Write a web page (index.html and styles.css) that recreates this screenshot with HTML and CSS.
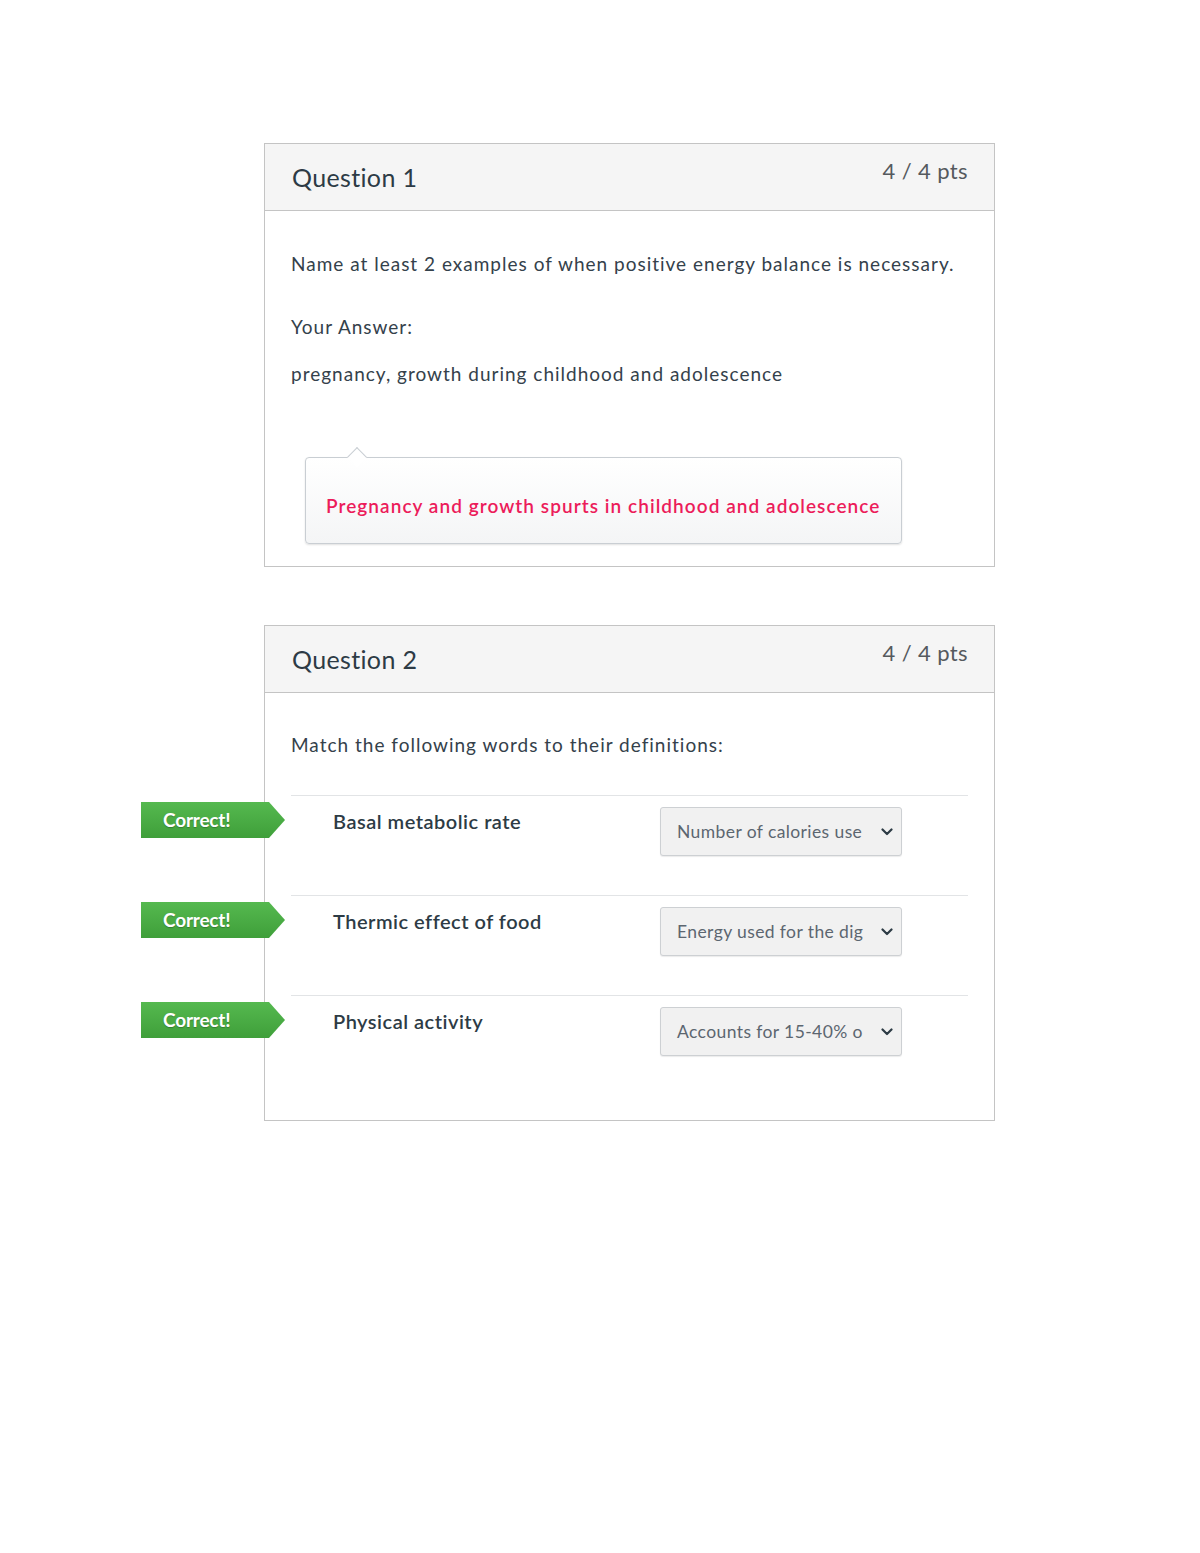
FILE: index.html
```html
<!DOCTYPE html>
<html>
<head>
<meta charset="utf-8">
<link rel="stylesheet" href="styles.css">
</head>
<body>
<main class="quiz">
  <section class="question q1">
    <header class="q-header">
      <h2 class="q-title">Question 1</h2>
      <span class="q-pts">4 / 4 pts</span>
    </header>
    <div class="q-body">
      <p class="q-text">Name at least 2 examples of when positive energy balance is necessary.</p>
      <p class="q-label">Your Answer:</p>
      <p class="q-answer">pregnancy, growth during childhood and adolescence</p>
      <div class="comment">
        <span class="comment-arrow"></span>
        <p class="comment-text">Pregnancy and growth spurts in childhood and adolescence</p>
      </div>
    </div>
  </section>

  <section class="question q2">
    <header class="q-header">
      <h2 class="q-title">Question 2</h2>
      <span class="q-pts">4 / 4 pts</span>
    </header>
    <div class="q-body">
      <p class="q-text">Match the following words to their definitions:</p>
      <div class="matches">
        <div class="match-row">
          <span class="badge">Correct!</span>
          <span class="match-term">Basal metabolic rate</span>
          <div class="select"><span class="select-text">Number of calories use</span><svg class="chev" viewBox="0 0 12 8" width="12" height="8"><path d="M1.5 1.5 L6 6 L10.5 1.5" fill="none" stroke="#2d3b45" stroke-width="2.2" stroke-linecap="round" stroke-linejoin="round"/></svg></div>
        </div>
        <div class="match-row">
          <span class="badge">Correct!</span>
          <span class="match-term">Thermic effect of food</span>
          <div class="select"><span class="select-text">Energy used for the dig</span><svg class="chev" viewBox="0 0 12 8" width="12" height="8"><path d="M1.5 1.5 L6 6 L10.5 1.5" fill="none" stroke="#2d3b45" stroke-width="2.2" stroke-linecap="round" stroke-linejoin="round"/></svg></div>
        </div>
        <div class="match-row">
          <span class="badge">Correct!</span>
          <span class="match-term">Physical activity</span>
          <div class="select"><span class="select-text">Accounts for 15-40% o</span><svg class="chev" viewBox="0 0 12 8" width="12" height="8"><path d="M1.5 1.5 L6 6 L10.5 1.5" fill="none" stroke="#2d3b45" stroke-width="2.2" stroke-linecap="round" stroke-linejoin="round"/></svg></div>
        </div>
      </div>
    </div>
  </section>
</main>
</body>
</html>
```
FILE: styles.css
```css
* { box-sizing: border-box; }
body {
  margin: 0;
  background: #fff;
  font-family: Lato, "Open Sans", sans-serif;
  color: #34414b;
}
.quiz {
  width: 731px;
  margin-left: 264px;
  padding-top: 143px;
  display: flex;
  flex-direction: column;
  gap: 58px;
}
.question {
  border: 1px solid #c4c4c4;
  position: relative;
}
.q-header {
  height: 67px;
  background: #f5f5f5;
  border-bottom: 1px solid #c4c4c4;
  display: flex;
  justify-content: space-between;
  padding: 0 26px 0 27px;
}
.q-title {
  margin: 0;
  font-size: 25px;
  font-weight: 400;
  letter-spacing: 0.35px;
  line-height: 28px;
  padding-top: 19px;
  color: #2d3b45;
}
.q-pts {
  font-size: 22px;
  letter-spacing: 0.4px;
  line-height: 26px;
  padding-top: 14px;
  color: #555a5e;
}
.q-body {
  padding: 0 26px;
}
.q-body p { margin: 0; }
.q-text, .q-label, .q-answer {
  font-size: 19px;
  letter-spacing: 1px;
  line-height: 28px;
}
.q1 .q-body { padding-top: 39px; padding-bottom: 22px; }
.q1 .q-label { margin-top: 35px; }
.q1 .q-answer { margin-top: 19px; }
.comment {
  position: relative;
  margin-top: 69px;
  margin-left: 14px;
  width: 597px;
  height: 87px;
  border: 1px solid #c9ced3;
  border-radius: 4px;
  background: linear-gradient(#fff, #f4f5f6);
  box-shadow: 0 1px 2px rgba(0,0,0,0.12);
  padding: 35px 0 0 20px;
}
.comment-arrow {
  position: absolute;
  top: -8px;
  left: 44px;
  width: 14px;
  height: 14px;
  background: #fff;
  border-left: 1px solid #c9ced3;
  border-top: 1px solid #c9ced3;
  transform: rotate(45deg);
}
.comment-text {
  font-size: 19px;
  letter-spacing: 1.05px;
  line-height: 26px;
  font-weight: 600;
  color: #ec1c5a;
}
.q2 .q-body { padding-top: 38px; padding-bottom: 65px; }
.matches { margin-top: 36px; }
.match-row {
  position: relative;
  height: 100px;
  border-top: 1px solid #e2e4e6;
  display: flex;
  align-items: flex-start;
  padding-top: 11px;
}
.match-row:nth-child(3) { height: 60px; }
.match-term {
  width: 369px;
  padding-left: 42px;
  font-size: 20px;
  letter-spacing: 0.5px;
  line-height: 28px;
  font-weight: 600;
  color: #2d3b45;
}
.select {
  width: 242px;
  height: 49px;
  border: 1px solid #cdd0d3;
  border-radius: 3px;
  background: #f1f1f1;
  box-shadow: 0 1px 1px rgba(0,0,0,0.08);
  display: flex;
  align-items: center;
  justify-content: space-between;
  padding: 0 8px 0 16px;
}
.select-text {
  font-size: 17.5px;
  letter-spacing: 0.4px;
  color: #5c6670;
  white-space: nowrap;
}
.chev { display: block; }
.badge {
  position: absolute;
  left: -150px;
  top: 6px;
  width: 144px;
  height: 36px;
  background: linear-gradient(#55b94f, #3f9f3a);
  clip-path: polygon(0 0, 128px 0, 144px 18px, 128px 36px, 0 36px);
  color: #fff;
  font-size: 19px;
  font-weight: 700;
  letter-spacing: -0.2px;
  line-height: 36px;
  padding-left: 22px;
  text-shadow: 0 1px 1px rgba(0,0,0,0.25);
}
```
